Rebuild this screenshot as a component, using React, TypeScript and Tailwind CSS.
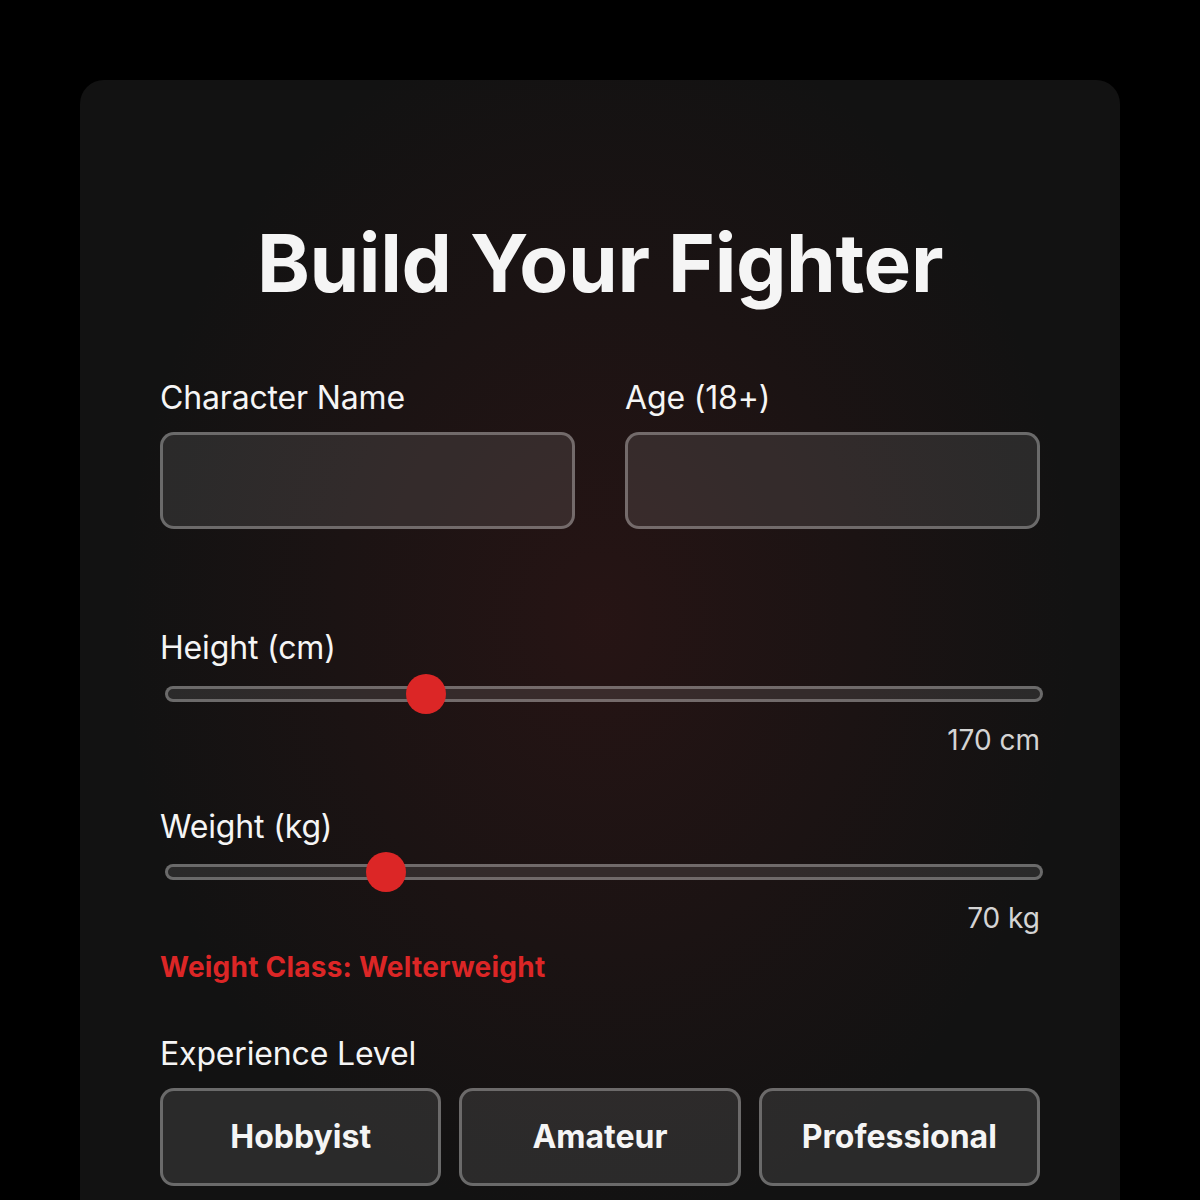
import React from "react";

const font = { fontFamily: "Inter, 'Noto Sans', sans-serif" };

type SliderProps = {
  label: string;
  value: string;
  thumbLeft: number;
  labelClass: string;
  valueClass: string;
};

const Slider: React.FC<SliderProps> = ({ label, value, thumbLeft, labelClass, valueClass }) => {
  return (
    <div className="flex flex-col">
      <label className={`text-[32px] leading-[40px] text-neutral-100 tracking-[-0.005em] ${labelClass}`}>{label}</label>
      <div className="relative h-[40px] ml-[5px] w-[878px] flex items-center">
        <div className="h-[16px] w-full rounded-full border-[3px] border-white/30 bg-white/10" />
        <div
          className="absolute top-0 h-[40px] w-[40px] rounded-full bg-[#dc2626]"
          style={{ left: thumbLeft }}
        />
      </div>
      <div className={`text-right text-[28px] leading-[32px] text-neutral-300 ${valueClass}`}>{value}</div>
    </div>
  );
};

export default function App() {
  return (
    <div className="h-[1200px] bg-black pt-[80px] px-[80px] overflow-hidden" style={font}>
      <div className="w-[1040px] min-h-[1200px] rounded-[24px] bg-[#121212] bg-[radial-gradient(ellipse_at_50%_45%,rgba(110,28,28,0.22),rgba(18,18,18,0)_65%)] px-[80px] pt-[143px]">
        <h1 className="text-center text-[80px] leading-[80px] font-bold text-neutral-100 tracking-[-0.005em]">
          Build Your Fighter
        </h1>

        <div className="mt-[75px] grid grid-cols-2 gap-[50px]">
          {["Character Name", "Age (18+)"].map((l) => (
            <div key={l} className="flex flex-col">
              <label className="text-[32px] leading-[40px] text-neutral-100 tracking-[-0.005em]">{l}</label>
              <input
                className="mt-[14px] h-[97px] rounded-[14px] border-[3px] border-white/30 bg-white/10 outline-none"
                type="text"
              />
            </div>
          ))}
        </div>

        <div className="mt-[99px]">
          <Slider label="Height (cm)" value="170 cm" thumbLeft={241} labelClass="mb-[6px]" valueClass="mt-[10px]" />
        </div>
        <div className="mt-[51px]">
          <Slider label="Weight (kg)" value="70 kg" thumbLeft={201} labelClass="mb-[5px]" valueClass="mt-[10px]" />
        </div>

        <div className="mt-[17px] text-[28px] leading-[32px] font-bold text-[#dc2626] tracking-[0.008em]">
          Weight Class: Welterweight
        </div>

        <div className="mt-[51px] text-[32px] leading-[40px] text-neutral-100 tracking-[-0.005em]">Experience Level</div>
        <div className="mt-[14px] grid grid-cols-3 gap-[18px]">
          {["Hobbyist", "Amateur", "Professional"].map((b) => (
            <button
              key={b}
              className="h-[98px] rounded-[14px] border-[3px] border-white/30 bg-white/10 text-[32px] font-bold text-neutral-100"
            >
              {b}
            </button>
          ))}
        </div>
      </div>
    </div>
  );
}
